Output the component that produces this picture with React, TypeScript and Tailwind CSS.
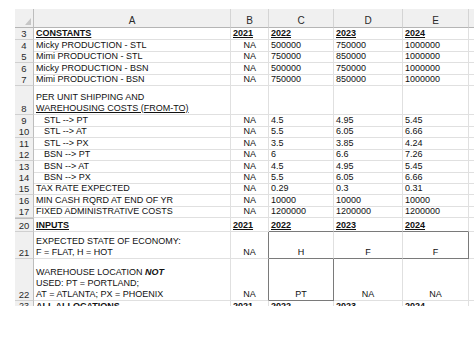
import React from "react";

const COLS = "grid grid-cols-[19px_197px_38px_65px_69px_66px_20px]";
const GR = "border-r-[#e0e0e0]";
const GB = "border-b-[#e0e0e0]";
const DR = "border-r-[#7a7a7a]";
const DB = "border-b-[#7a7a7a]";

type CellProps = {
  children?: React.ReactNode;
  cls?: string;
  r?: string;
  b?: string;
};

function Cell({ children, cls = "", r = GR, b = GB }: CellProps) {
  return (
    <div
      className={`flex items-end overflow-hidden whitespace-nowrap border-r border-b px-[2px] leading-[11px] ${r} ${b} ${cls}`}
    >
      {children}
    </div>
  );
}

function Num({ n, cls = "" }: { n: string; cls?: string }) {
  return (
    <div
      className={`flex items-end justify-center border-r border-b border-r-[#bdbdbd] border-b-[#d0d0d0] bg-[#f0f0f0] text-[9.5px] leading-[11px] text-[#2a2a2a] ${cls}`}
    >
      {n}
    </div>
  );
}

function Head({ children }: { children?: React.ReactNode }) {
  return (
    <div className="flex items-end justify-center border-r border-b border-r-[#d4d4d4] border-b-[#b5b5b5] bg-[#f0f0f0] pb-[1px] text-[10px] leading-[11px] text-[#2a2a2a]">
      {children}
    </div>
  );
}

const NA = "justify-end pr-[12px]";

function DataRow({
  n,
  a,
  b = "NA",
  c,
  d,
  e,
  indent = false,
}: {
  n: string;
  a: string;
  b?: string;
  c: string;
  d: string;
  e: string;
  indent?: boolean;
}) {
  return (
    <div className={`${COLS} h-[11.44px]`}>
      <Num n={n} />
      <Cell cls={indent ? "pl-[10px]" : ""}>{a}</Cell>
      <Cell cls={NA}>{b}</Cell>
      <Cell>{c}</Cell>
      <Cell>{d}</Cell>
      <Cell>{e}</Cell>
      <Cell />
    </div>
  );
}

function YearRow({ n, label, h }: { n: string; label: string; h: string }) {
  return (
    <div className={`${COLS} ${h}`}>
      <Num n={n} />
      <Cell cls="font-bold underline">{label}</Cell>
      <Cell cls="font-bold underline">2021</Cell>
      <Cell cls="font-bold underline">2022</Cell>
      <Cell cls="font-bold underline">2023</Cell>
      <Cell cls="font-bold underline">2024</Cell>
      <Cell />
    </div>
  );
}

export default function App() {
  return (
    <div className="h-[354px] w-[474px] overflow-hidden bg-white pl-[15px] pt-[9px] font-['Liberation_Sans',Arial,sans-serif] text-[9px] text-[#111]">
      <div className="w-[459px] overflow-hidden">
        <div className={`${COLS} h-[19px]`}>
          <div className="relative border-r border-b border-r-[#bdbdbd] border-b-[#b5b5b5] bg-[#f0f0f0]">
            <svg className="absolute bottom-[2px] right-[2px]" width="6" height="7" viewBox="0 0 6 7">
              <polygon points="6,0 6,7 0,7" fill="#c6c6c6" />
            </svg>
          </div>
          <Head>A</Head>
          <Head>B</Head>
          <Head>C</Head>
          <Head>D</Head>
          <Head>E</Head>
          <Head />
        </div>

        <YearRow n="3" label="CONSTANTS" h="h-[12px]" />
        <DataRow n="4" a="Micky PRODUCTION - STL" c="500000" d="750000" e="1000000" />
        <DataRow n="5" a="Mimi PRODUCTION - STL" c="750000" d="850000" e="1000000" />
        <DataRow n="6" a="Micky PRODUCTION - BSN" c="500000" d="750000" e="1000000" />
        <DataRow n="7" a="Mimi PRODUCTION - BSN" c="750000" d="850000" e="1000000" />

        <div className={`${COLS} h-[29px]`}>
          <Num n="8" />
          <Cell cls="leading-[11.7px]">
            <div className="flex flex-col">
              <span>PER UNIT SHIPPING AND</span>
              <span className="underline">WAREHOUSING COSTS (FROM-TO)</span>
            </div>
          </Cell>
          <Cell />
          <Cell />
          <Cell />
          <Cell />
          <Cell />
        </div>

        <DataRow n="9" indent a="STL --> PT" c="4.5" d="4.95" e="5.45" />
        <DataRow n="10" indent a="STL --> AT" c="5.5" d="6.05" e="6.66" />
        <DataRow n="11" indent a="STL --> PX" c="3.5" d="3.85" e="4.24" />
        <DataRow n="12" indent a="BSN --> PT" c="6" d="6.6" e="7.26" />
        <DataRow n="13" indent a="BSN --> AT" c="4.5" d="4.95" e="5.45" />
        <DataRow n="14" indent a="BSN --> PX" c="5.5" d="6.05" e="6.66" />
        <DataRow n="15" a="TAX RATE EXPECTED" c="0.29" d="0.3" e="0.31" />
        <DataRow n="16" a="MIN CASH RQRD AT END OF YR" c="10000" d="10000" e="10000" />
        <DataRow n="17" a="FIXED ADMINISTRATIVE COSTS" c="1200000" d="1200000" e="1200000" />

        <div className={`${COLS} h-[14px]`}>
          <Num n="20" cls="border-t border-t-[#bdbdbd]" />
          <Cell cls="font-bold underline">INPUTS</Cell>
          <Cell cls="font-bold underline">2021</Cell>
          <Cell cls="font-bold underline" b={DB}>2022</Cell>
          <Cell cls="font-bold underline" b={DB}>2023</Cell>
          <Cell cls="font-bold underline" b={DB}>2024</Cell>
          <Cell />
        </div>

        <div className={`${COLS} h-[27px]`}>
          <Num n="21" />
          <Cell cls="leading-[11.7px]">
            <div className="flex flex-col">
              <span>EXPECTED STATE OF ECONOMY:</span>
              <span>F = FLAT, H = HOT</span>
            </div>
          </Cell>
          <Cell cls="items-center justify-center" r={DR}>NA</Cell>
          <Cell cls="items-center justify-center" b={DB}>H</Cell>
          <Cell cls="items-center justify-center" b={DB}>F</Cell>
          <Cell cls="items-center justify-center" r={DR} b={DB}>F</Cell>
          <Cell />
        </div>

        <div className={`${COLS} h-[42px]`}>
          <Num n="22" />
          <Cell cls="leading-[11.7px]">
            <div className="flex flex-col">
              <span>
                WAREHOUSE LOCATION <b className="italic">NOT</b>
              </span>
              <span>USED: PT = PORTLAND;</span>
              <span>AT = ATLANTA; PX = PHOENIX</span>
            </div>
          </Cell>
          <Cell cls="items-center justify-center" r={DR}>NA</Cell>
          <Cell cls="items-center justify-center" r={DR} b={DB}>PT</Cell>
          <Cell cls="items-center justify-center">NA</Cell>
          <Cell cls="items-center justify-center">NA</Cell>
          <Cell />
        </div>

        <div className={`${COLS} h-[5px] overflow-hidden`}>
          <div className="flex items-start justify-center border-r border-r-[#bdbdbd] bg-[#f0f0f0] leading-[11px] text-[#2a2a2a]">23</div>
          <div className="flex items-start border-r border-r-[#e0e0e0] px-[2px] leading-[11px] font-bold underline">ALL ALLOCATIONS</div>
          <div className="flex items-start border-r border-r-[#e0e0e0] px-[2px] leading-[11px] font-bold">2021</div>
          <div className="flex items-start border-r border-r-[#e0e0e0] px-[2px] leading-[11px] font-bold">2022</div>
          <div className="flex items-start border-r border-r-[#e0e0e0] px-[2px] leading-[11px] font-bold">2023</div>
          <div className="flex items-start border-r border-r-[#e0e0e0] px-[2px] leading-[11px] font-bold">2024</div>
          <div />
        </div>
      </div>
    </div>
  );
}
